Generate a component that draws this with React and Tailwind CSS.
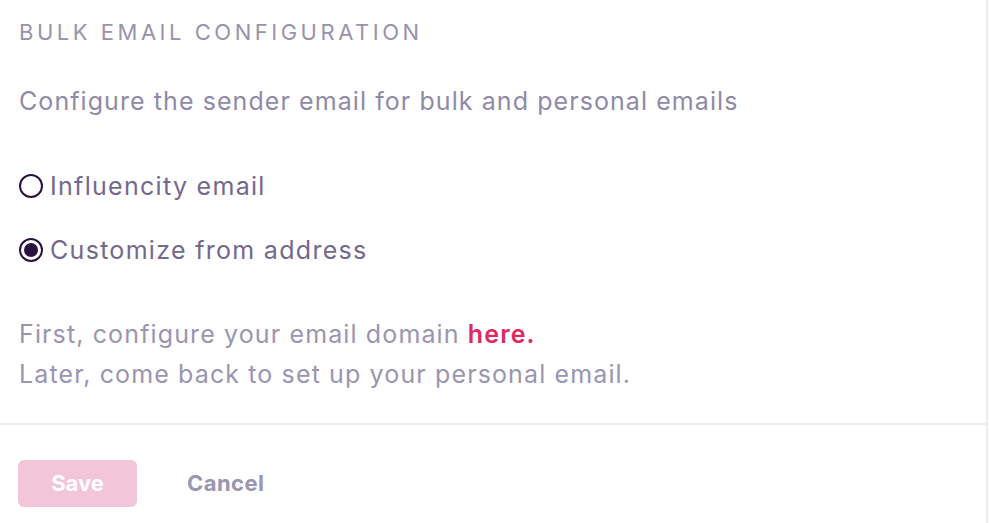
import React, { useState } from 'react';

export default function App() {
  const [mode, setMode] = useState('custom');

  return (
    <div className="w-[989px] h-[523px] bg-white overflow-hidden" style={{ fontFamily: 'Inter, Roboto, "Noto Sans", sans-serif' }}>
      <div className="w-[988px] h-full border-r-2 border-[#ebebf0] flex flex-col">
        {/* Body */}
        <div className="pl-[19px] pt-[16px] h-[425px] border-b-2 border-[#ebebf0]">
          <h2 className="text-[22px] leading-[32px] tracking-[0.16em] text-[#9893ad] uppercase">Bulk email configuration</h2>

          <p className="mt-[37px] text-[25px] leading-[32px] tracking-[0.043em] text-[#8f8aa8]">
            Configure the sender email for bulk and personal emails
          </p>

          <div className="mt-[53px] flex flex-col gap-[32px]">
            <label className="flex items-center gap-[7px] cursor-pointer" onClick={() => setMode('influencity')}>
              <span className="w-[24px] h-[24px] rounded-full border-2 border-[#2a1140] flex items-center justify-center">
                {mode === 'influencity' && <span className="w-[14px] h-[14px] rounded-full bg-[#2a1140]" />}
              </span>
              <span className="text-[25px] leading-[32px] tracking-[0.052em] text-[#74688e]">Influencity email</span>
            </label>
            <label className="flex items-center gap-[7px] cursor-pointer" onClick={() => setMode('custom')}>
              <span className="w-[24px] h-[24px] rounded-full border-2 border-[#2a1140] flex items-center justify-center">
                {mode === 'custom' && <span className="w-[14px] h-[14px] rounded-full bg-[#2a1140]" />}
              </span>
              <span className="text-[25px] leading-[32px] tracking-[0.052em] text-[#74688e]">Customize from address</span>
            </label>
          </div>

          <div className="mt-[48px] text-[25px] leading-[40px] tracking-[0.045em] text-[#9a95b0]">
            <p>
              First, configure your email domain <a href="#" className="font-semibold text-[#dd2a62]">here.</a>
            </p>
            <p>Later, come back to set up your personal email.</p>
          </div>
        </div>

        {/* Footer */}
        <div className="flex items-center pl-[18px] pt-[35px] gap-[50px]">
          <button className="w-[119px] h-[47px] rounded-[6px] bg-[#f2c6d8] text-white text-[22px] font-bold">Save</button>
          <button className="text-[22px] font-bold tracking-[0.02em] text-[#9a95b0]">Cancel</button>
        </div>
      </div>
    </div>
  );
}
